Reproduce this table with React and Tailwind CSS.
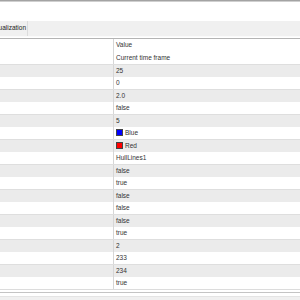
import React from "react";

const rows = [
  { value: "25" },
  { value: "0" },
  { value: "2.0" },
  { value: "false" },
  { value: "5" },
  { value: "Blue", swatch: "bg-[#0000ff]" },
  { value: "Red", swatch: "bg-[#ff0000]" },
  { value: "HullLines1" },
  { value: "false" },
  { value: "true" },
  { value: "false" },
  { value: "false" },
  { value: "false" },
  { value: "true" },
  { value: "2" },
  { value: "233" },
  { value: "234" },
  { value: "true" },
];

function Row({ row, shaded }) {
  return (
    <div
      className={
        "grid grid-cols-[114px_1fr] h-[12.5px] " +
        (shaded ? "bg-[#ebebeb] border-t border-[#dedede]" : "bg-white")
      }
    >
      <div className="border-r border-[#d6d6d6]" />
      <div className="flex items-center pl-[2px] gap-[2px]">
        {row.swatch && (
          <span className={"inline-block w-[7px] h-[7px] border border-[#444] " + row.swatch} />
        )}
        <span>{row.value}</span>
      </div>
    </div>
  );
}

export default function App() {
  return (
    <div
      className="w-[300px] h-[300px] overflow-hidden bg-white text-[6.5px] leading-none text-[#333] flex flex-col"
      style={{ fontFamily: '"Liberation Sans", Arial, sans-serif' }}
    >
      <div className="h-[2px] bg-[#a3a3a3] border-b border-[#cfcfcf]" />
      <div className="h-[19px]" />

      {/* tab strip */}
      <div className="h-[16px] bg-[#f0f0f0] flex border-b border-[#fafafa]">
        <div className="w-[28px] flex justify-end items-center whitespace-nowrap border-r border-[#dcdcdc] pr-[1px] text-[#222]">
          ualization
        </div>
      </div>
      <div className="h-[1px]" />
      <div className="h-[1px] bg-[#b4b4b4]" />

      {/* header */}
      <div className="grid grid-cols-[114px_1fr]">
        <div className="border-r border-[#d6d6d6]" />
        <div className="flex flex-col pl-[2px]">
          <div className="h-[12.5px] flex items-center">Value</div>
          <div className="h-[12.5px] flex items-center">Current time frame</div>
        </div>
      </div>

      {rows.map((r, i) => (
        <Row key={i} row={r} shaded={i % 2 === 0} />
      ))}

      <div className="h-[1px] bg-[#dcdcdc]" />
      <div className="h-[2px]" />
      <div className="h-[1px] bg-[#c4c4c4]" />
      <div className="h-[3px]" />
      <div className="flex-1 bg-[#f0f0f0] border-t border-[#e4e4e4]" />
    </div>
  );
}
